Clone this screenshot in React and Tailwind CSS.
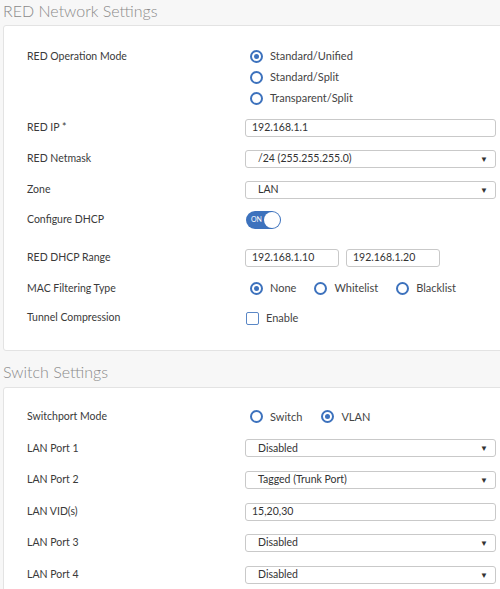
import React from "react";

const font = { fontFamily: "Lato, 'Noto Sans', sans-serif" };

const Radio = ({ checked, label }) => (
  <span className="flex items-center gap-[7px]">
    <span className="w-[13px] h-[13px] rounded-full border-2 border-[#3d72bd] flex items-center justify-center bg-white">
      {checked && <span className="w-[5px] h-[5px] rounded-full bg-[#3d72bd]" />}
    </span>
    <span className="text-[11px] text-[#444]">{label}</span>
  </span>
);

const TextInput = ({ value, w = "w-[251px]" }) => (
  <div className={`${w} h-[18px] border border-[#c9c9c9] rounded-[3px] bg-white flex items-center px-[6px] text-[10.5px] text-[#333]`}>
    {value}
  </div>
);

const Select = ({ value }) => (
  <div className="w-[251px] h-[18px] border border-[#c9c9c9] rounded-[3px] bg-white flex items-center justify-between pl-[12px] pr-[7px] text-[10.5px] text-[#333]">
    <span>{value}</span>
    <span className="text-[8px] text-[#333]">▼</span>
  </div>
);

const Row = ({ label, h = "h-[31px]", className = "", children }) => (
  <div className={`flex items-center ${h} ${className}`}>
    <div className="w-[218px] text-[10.5px] text-[#3a3a3a]">{label}</div>
    <div className="flex items-center">{children}</div>
  </div>
);

const Heading = ({ children, className = "" }) => (
  <div className={`text-[16px] leading-[22px] font-light text-[#8a8a8a] pl-[3px] ${className}`}>{children}</div>
);

export default function App() {
  return (
    <div className="w-[500px] h-[589px] overflow-hidden bg-[#f7f7f7]" style={font}>
      <Heading className="h-[25px]">RED Network Settings</Heading>
      <div className="ml-[3px] w-[520px] bg-white border border-[#e3e3e3] rounded-[3px] pl-[23px] pt-[20px] pb-[18px]">
        <div className="flex">
          <div className="w-[218px] h-[21px] flex items-center text-[10.5px] text-[#3a3a3a]">RED Operation Mode</div>
          <div className="flex flex-col pl-[5px]">
            <div className="h-[21px] flex items-center"><Radio checked label="Standard/Unified" /></div>
            <div className="h-[21px] flex items-center"><Radio label="Standard/Split" /></div>
            <div className="h-[21px] flex items-center"><Radio label="Transparent/Split" /></div>
          </div>
        </div>
        <Row label="RED IP *" className="mt-[3px]">
          <TextInput value="192.168.1.1" />
        </Row>
        <Row label="RED Netmask">
          <Select value="/24 (255.255.255.0)" />
        </Row>
        <Row label="Zone">
          <Select value="LAN" />
        </Row>
        <Row label="Configure DHCP" h="h-[29px]">
          <div className="ml-[1px] w-[35px] h-[18px] rounded-full bg-[#3d72bd] flex items-center justify-between pl-[5px] pr-[1px]">
            <span className="text-[7px] text-white">ON</span>
            <span className="w-[16px] h-[16px] rounded-full bg-white" />
          </div>
        </Row>
        <Row label="RED DHCP Range" className="mt-[8px]">
          <div className="flex gap-[7px]">
            <TextInput value="192.168.1.10" w="w-[94px]" />
            <TextInput value="192.168.1.20" w="w-[94px]" />
          </div>
        </Row>
        <Row label="MAC Filtering Type">
          <div className="flex gap-[18px] pl-[5px]">
            <Radio checked label="None" />
            <Radio label="Whitelist" />
            <Radio label="Blacklist" />
          </div>
        </Row>
        <Row label="Tunnel Compression" h="h-[28px]">
          <span className="flex items-center gap-[7px] pl-[1px]">
            <span className="w-[13px] h-[13px] rounded-[2px] border-[1.5px] border-[#5a87c6] bg-white" />
            <span className="text-[11px] text-[#444]">Enable</span>
          </span>
        </Row>
      </div>
      <Heading className="pt-[10px] h-[36px]">Switch Settings</Heading>
      <div className="ml-[3px] w-[520px] h-[260px] bg-white border border-[#e3e3e3] rounded-[3px] pl-[23px] pt-[13px]">
        <Row label="Switchport Mode" h="h-[31.6px]">
          <div className="flex gap-[19px] pl-[5px]">
            <Radio label="Switch" />
            <Radio checked label="VLAN" />
          </div>
        </Row>
        <Row label="LAN Port 1" h="h-[31.6px]">
          <Select value="Disabled" />
        </Row>
        <Row label="LAN Port 2" h="h-[31.6px]">
          <Select value="Tagged (Trunk Port)" />
        </Row>
        <Row label="LAN VID(s)" h="h-[31.6px]">
          <TextInput value="15,20,30" />
        </Row>
        <Row label="LAN Port 3" h="h-[31.6px]">
          <Select value="Disabled" />
        </Row>
        <Row label="LAN Port 4" h="h-[31.6px]">
          <Select value="Disabled" />
        </Row>
      </div>
    </div>
  );
}
